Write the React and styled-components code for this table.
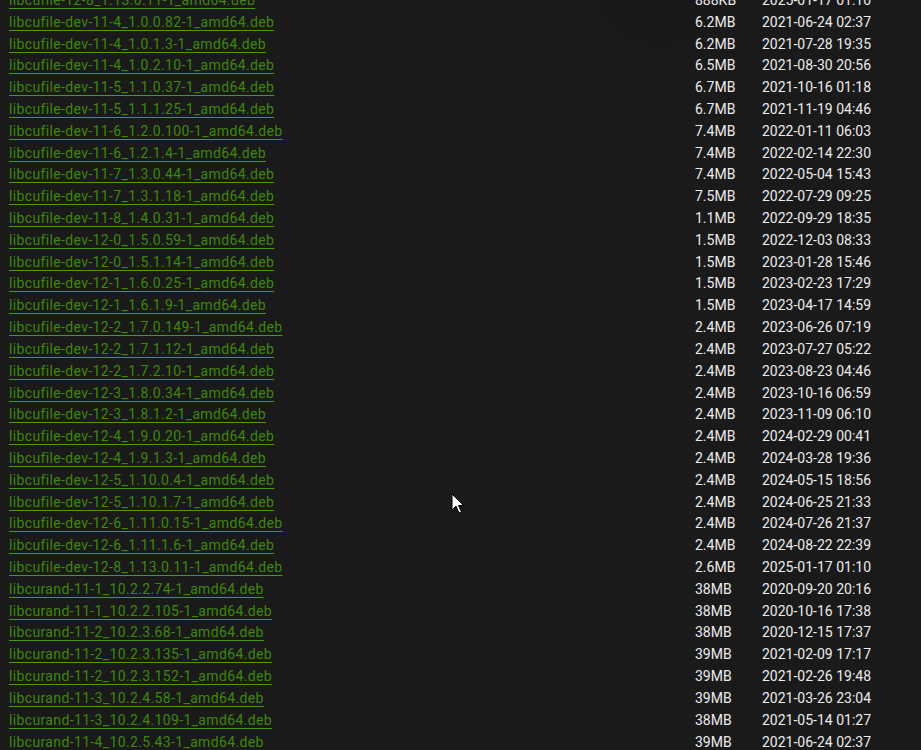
import React from "react";
import styled, { createGlobalStyle } from "styled-components";

const Global = createGlobalStyle`
  html, body { margin: 0; padding: 0; background: #1a1a1a; }
  body { font-family: Roboto, "Liberation Sans", sans-serif; }
`;

const rows = [
  ["libcufile-12-8_1.13.0.11-1_amd64.deb", "888KB", "2025-01-17 01:10"],
  ["libcufile-dev-11-4_1.0.0.82-1_amd64.deb", "6.2MB", "2021-06-24 02:37"],
  ["libcufile-dev-11-4_1.0.1.3-1_amd64.deb", "6.2MB", "2021-07-28 19:35"],
  ["libcufile-dev-11-4_1.0.2.10-1_amd64.deb", "6.5MB", "2021-08-30 20:56"],
  ["libcufile-dev-11-5_1.1.0.37-1_amd64.deb", "6.7MB", "2021-10-16 01:18"],
  ["libcufile-dev-11-5_1.1.1.25-1_amd64.deb", "6.7MB", "2021-11-19 04:46"],
  ["libcufile-dev-11-6_1.2.0.100-1_amd64.deb", "7.4MB", "2022-01-11 06:03"],
  ["libcufile-dev-11-6_1.2.1.4-1_amd64.deb", "7.4MB", "2022-02-14 22:30"],
  ["libcufile-dev-11-7_1.3.0.44-1_amd64.deb", "7.4MB", "2022-05-04 15:43"],
  ["libcufile-dev-11-7_1.3.1.18-1_amd64.deb", "7.5MB", "2022-07-29 09:25"],
  ["libcufile-dev-11-8_1.4.0.31-1_amd64.deb", "1.1MB", "2022-09-29 18:35"],
  ["libcufile-dev-12-0_1.5.0.59-1_amd64.deb", "1.5MB", "2022-12-03 08:33"],
  ["libcufile-dev-12-0_1.5.1.14-1_amd64.deb", "1.5MB", "2023-01-28 15:46"],
  ["libcufile-dev-12-1_1.6.0.25-1_amd64.deb", "1.5MB", "2023-02-23 17:29"],
  ["libcufile-dev-12-1_1.6.1.9-1_amd64.deb", "1.5MB", "2023-04-17 14:59"],
  ["libcufile-dev-12-2_1.7.0.149-1_amd64.deb", "2.4MB", "2023-06-26 07:19"],
  ["libcufile-dev-12-2_1.7.1.12-1_amd64.deb", "2.4MB", "2023-07-27 05:22"],
  ["libcufile-dev-12-2_1.7.2.10-1_amd64.deb", "2.4MB", "2023-08-23 04:46"],
  ["libcufile-dev-12-3_1.8.0.34-1_amd64.deb", "2.4MB", "2023-10-16 06:59"],
  ["libcufile-dev-12-3_1.8.1.2-1_amd64.deb", "2.4MB", "2023-11-09 06:10"],
  ["libcufile-dev-12-4_1.9.0.20-1_amd64.deb", "2.4MB", "2024-02-29 00:41"],
  ["libcufile-dev-12-4_1.9.1.3-1_amd64.deb", "2.4MB", "2024-03-28 19:36"],
  ["libcufile-dev-12-5_1.10.0.4-1_amd64.deb", "2.4MB", "2024-05-15 18:56"],
  ["libcufile-dev-12-5_1.10.1.7-1_amd64.deb", "2.4MB", "2024-06-25 21:33"],
  ["libcufile-dev-12-6_1.11.0.15-1_amd64.deb", "2.4MB", "2024-07-26 21:37"],
  ["libcufile-dev-12-6_1.11.1.6-1_amd64.deb", "2.4MB", "2024-08-22 22:39"],
  ["libcufile-dev-12-8_1.13.0.11-1_amd64.deb", "2.6MB", "2025-01-17 01:10"],
  ["libcurand-11-1_10.2.2.74-1_amd64.deb", "38MB", "2020-09-20 20:16"],
  ["libcurand-11-1_10.2.2.105-1_amd64.deb", "38MB", "2020-10-16 17:38"],
  ["libcurand-11-2_10.2.3.68-1_amd64.deb", "38MB", "2020-12-15 17:37"],
  ["libcurand-11-2_10.2.3.135-1_amd64.deb", "39MB", "2021-02-09 17:17"],
  ["libcurand-11-2_10.2.3.152-1_amd64.deb", "39MB", "2021-02-26 19:48"],
  ["libcurand-11-3_10.2.4.58-1_amd64.deb", "39MB", "2021-03-26 23:04"],
  ["libcurand-11-3_10.2.4.109-1_amd64.deb", "38MB", "2021-05-14 01:27"],
  ["libcurand-11-4_10.2.5.43-1_amd64.deb", "39MB", "2021-06-24 02:37"],
];

const Page = styled.div`
  position: relative;
  width: 921px;
  height: 750px;
  overflow: hidden;
  background:
    radial-gradient(circle at 660px -20px, #181818 0, #181818 60px, rgba(26,26,26,0) 70px),
    #1a1a1a;
`;

const Listing = styled.div`
  display: grid;
  grid-template-columns: 686px 67px auto;
  grid-auto-rows: 21.818px;
  align-items: center;
  margin-top: -11px;
  padding-left: 9px;
  font-size: 14px;
`;

const FileLink = styled.a`
  color: #3e870b;
  letter-spacing: 0.36px;
  text-decoration: underline;
  text-decoration-color: #4a9a0e;
  text-underline-offset: 3px;
  white-space: nowrap;
`;

const Cell = styled.span`
  color: #ececec;
  white-space: nowrap;
`;

const Cursor = styled.svg`
  position: absolute;
  left: 451px;
  top: 493px;
`;

export default function App() {
  return (
    <Page>
      <Global />
      <Listing>
        {rows.map(([name, size, date]) => (
          <React.Fragment key={name + date}>
            <FileLink href="#">{name}</FileLink>
            <Cell>{size}</Cell>
            <Cell>{date}</Cell>
          </React.Fragment>
        ))}
      </Listing>
      <Cursor width="14" height="22" viewBox="0 0 14 22">
        <path d="M1 1 L1 17 L5 13 L8 20 L10.5 19 L7.5 12.5 L12.5 12.5 Z" fill="#fff" stroke="#000" strokeWidth="1" />
      </Cursor>
    </Page>
  );
}
